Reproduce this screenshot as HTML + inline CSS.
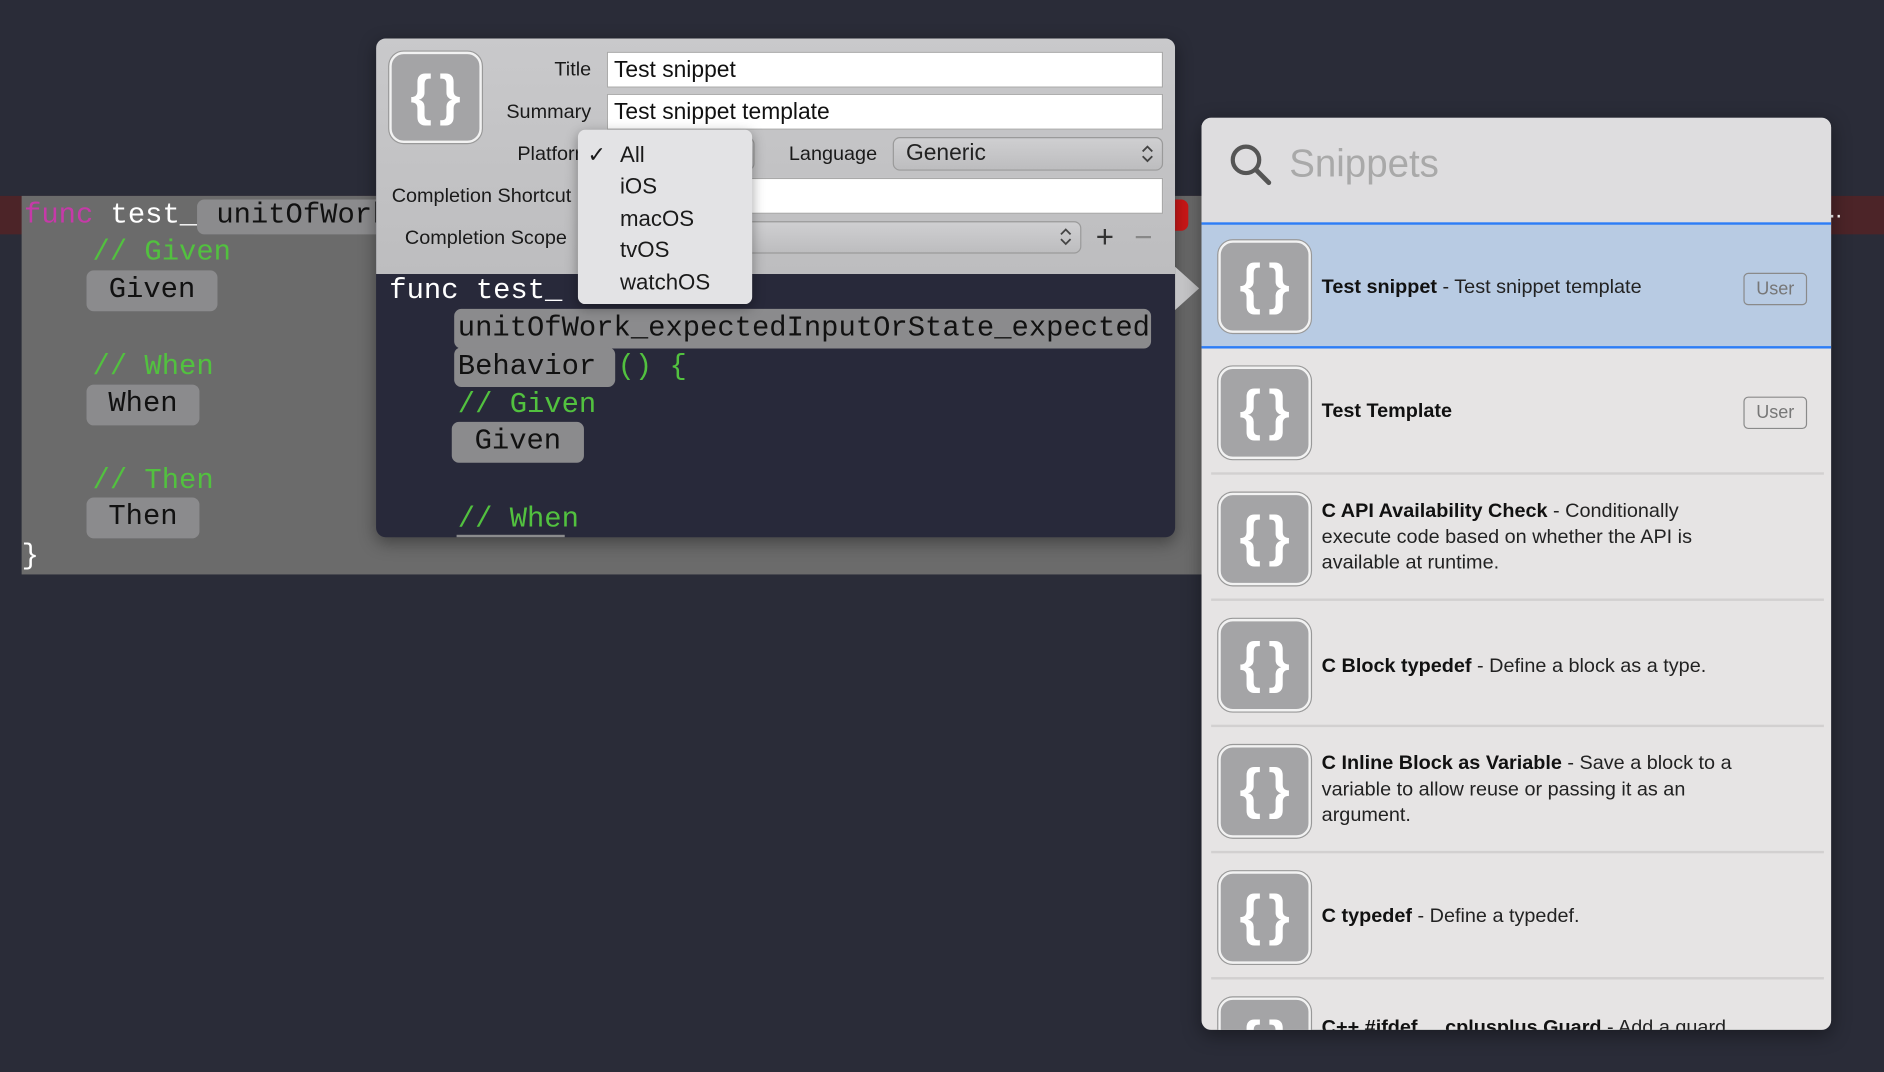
<!DOCTYPE html>
<html><head><meta charset="utf-8"><style>
html,body{margin:0;padding:0;width:1884px;height:1072px;overflow:hidden;background:#2a2c38}
#w{position:absolute;left:0;top:0;width:1568px;height:892px;transform:scale(1.20153,1.20179);transform-origin:0 0;font-family:"Liberation Sans",sans-serif}
.a{position:absolute}
.mono{font-family:"Liberation Mono","DejaVu Sans Mono",monospace;font-size:24px;line-height:32px;white-space:pre}
.ph{background:#8b8b8d;border-radius:6px;color:#111}
.g{color:#52c13f}
.lbl{position:absolute;font-size:16.5px;color:#1a1a1a;text-align:right}
.fld{position:absolute;background:#fff;border:1px solid #a9a9a9;font-size:19px;line-height:28px;padding-left:5px;box-sizing:border-box;color:#111}
.pop{position:absolute;border:1px solid #9a9a9a;border-radius:6px;background:linear-gradient(#cfcfd1,#bdbdbf);box-sizing:border-box;font-size:19px;line-height:26px;padding-left:10px;color:#222}
.icon{position:absolute;width:73px;height:73px;background:#a4a4a6;border:2px solid #f2f2f2;border-radius:12px;box-shadow:0 0 0 1px #999;color:#fff;font-size:46px;font-weight:bold;text-align:center;line-height:68px;font-family:"Liberation Sans",sans-serif;letter-spacing:6px;text-indent:6px}
.row{position:absolute;left:0;width:524px;height:105px}
.row .icon{left:14px;top:15px}
.row .t{position:absolute;left:100px;width:370px;font-size:16.5px;line-height:21.5px;color:#222}
.row b{font-weight:bold;color:#111}
.sep{position:absolute;left:8px;right:6px;bottom:0;height:2px;background:#d2d0d0}
.user{position:absolute;left:451px;width:51px;height:25px;border:1px solid #8a8a8a;border-radius:4px;font-size:15px;line-height:25px;text-align:center;color:#777}
</style></head><body><div id="w">
<div class="a" style="left:0;top:163px;width:1568px;height:32px;background:#4c2428"></div>
<div class="a" style="left:18px;top:163px;width:982px;height:315px;background:#6b6b6b"></div>
<div class="a mono" style="left:20px;top:164px;color:#fff"><span style="color:#c63aa8">func</span> test_<span class="ph" style="padding:0 12px 2px 16px">unitOfWork</span></div>
<div class="a mono g" style="left:77px;top:195px">// Given</div>
<div class="a ph mono" style="left:72px;top:225px;width:109px;height:34px;text-align:center;line-height:34px">Given</div>
<div class="a mono g" style="left:77px;top:290px">// When</div>
<div class="a ph mono" style="left:72px;top:320px;width:94px;height:34px;text-align:center;line-height:34px">When</div>
<div class="a mono g" style="left:77px;top:385px">// Then</div>
<div class="a ph mono" style="left:72px;top:414px;width:94px;height:34px;text-align:center;line-height:34px">Then</div>
<div class="a mono" style="left:18px;top:448px;color:#fff">}</div>
<div class="a" style="left:965px;top:166px;width:24px;height:26px;background:#d01818;border-radius:6px"></div>
<div class="a" style="left:1522px;top:164px;color:#fff;font-size:20px">..</div>

<div class="a" style="left:313px;top:32px;width:665px;height:415px;border-radius:8px;overflow:hidden;background:#28293a;box-shadow:0 4px 14px rgba(0,0,0,.4)">
 <div class="a" style="left:0;top:0;width:665px;height:196px;background:linear-gradient(#c9c9cb,#bdbdbf)"></div>
</div>
<div class="a" style="left:978px;top:222px;width:0;height:0;border-top:18px solid transparent;border-bottom:18px solid transparent;border-left:20px solid #c4c4c6"></div>
<div class="icon" style="left:324px;top:43px;width:73px;height:72px">{}</div>
<div class="lbl" style="left:400px;width:92px;top:49px">Title</div>
<div class="lbl" style="left:400px;width:92px;top:84px">Summary</div>
<div class="lbl" style="left:400px;width:92px;top:119px">Platform</div>
<div class="lbl" style="left:600px;width:130px;top:119px">Language</div>
<div class="lbl" style="left:326px;width:200px;top:154px;text-align:left">Completion Shortcut</div>
<div class="lbl" style="left:337px;width:200px;top:189px;text-align:left">Completion Scope</div>
<div class="fld" style="left:505px;top:43px;width:463px;height:30px;line-height:30px">Test snippet</div>
<div class="fld" style="left:505px;top:78px;width:463px;height:30px;line-height:30px">Test snippet template</div>
<div class="pop" style="left:560px;top:114px;width:68px;height:28px"></div>
<div class="pop" style="left:743px;top:114px;width:225px;height:28px">Generic<svg style="position:absolute;right:7px;top:5px" width="10" height="16" viewBox="0 0 10 16"><path d="M1 6 L5 2 L9 6 M1 10 L5 14 L9 10" fill="none" stroke="#444" stroke-width="1.5"/></svg></div>
<div class="fld" style="left:560px;top:148px;width:408px;height:30px"></div>
<div class="pop" style="left:560px;top:184px;width:340px;height:27px"><svg style="position:absolute;right:7px;top:4px" width="10" height="16" viewBox="0 0 10 16"><path d="M1 6 L5 2 L9 6 M1 10 L5 14 L9 10" fill="none" stroke="#444" stroke-width="1.5"/></svg></div>
<div class="a" style="left:912px;top:182px;font-size:26px;color:#333">+</div>
<div class="a" style="left:944px;top:182px;font-size:26px;color:#888">−</div>
<div class="a mono" style="left:324px;top:227px;color:#fff">func test_</div>
<div class="a ph mono" style="left:378px;top:257px;width:580px;height:33px;padding-left:3px;box-sizing:border-box;line-height:34px">unitOfWork_expectedInputOrState_expected</div>
<div class="a ph mono" style="left:378px;top:289px;width:134px;height:33px;padding-left:3px;box-sizing:border-box;line-height:34px">Behavior</div>
<div class="a mono g" style="left:514px;top:290px">() {</div>
<div class="a mono g" style="left:381px;top:322px">// Given</div>
<div class="a ph mono" style="left:376px;top:351px;width:110px;height:34px;text-align:center;line-height:34px">Given</div>
<div class="a mono g" style="left:381px;top:417px">// When</div>
<div class="a" style="left:380px;top:445px;width:90px;height:2px;background:#8b8b8d"></div>

<div class="a" style="left:481px;top:108px;width:145px;height:145px;background:#e3e3e5;border-radius:6px;box-shadow:0 3px 10px rgba(0,0,0,.35);font-size:18.5px;color:#1a1a1a">
 <div class="a" style="left:8px;top:10px">✓</div>
 <div class="a" style="left:35px;top:10px">All</div>
 <div class="a" style="left:35px;top:36px">iOS</div>
 <div class="a" style="left:35px;top:63px">macOS</div>
 <div class="a" style="left:35px;top:89px">tvOS</div>
 <div class="a" style="left:35px;top:116px">watchOS</div>
</div>

<div class="a" style="left:1000px;top:98px;width:524px;height:759px;background:#e6e4e4;border-radius:8px;overflow:hidden;box-shadow:0 4px 16px rgba(0,0,0,.4)">
 <div class="a" style="left:0;top:0;width:524px;height:87px;background:#dedddf"></div>
 <svg class="a" style="left:22px;top:20px" width="38" height="38" viewBox="0 0 38 38"><circle cx="15" cy="15" r="11" fill="none" stroke="#555" stroke-width="3.5"/><line x1="23" y1="23" x2="34" y2="34" stroke="#555" stroke-width="4" stroke-linecap="round"/></svg>
 <div class="a" style="left:73px;top:20px;font-size:32px;color:#a9a9a9">Snippets</div>
 <div class="row" style="top:87px;height:105px;background:#b8cbe3;border-top:2px solid #2d7df6;border-bottom:2px solid #2d7df6;box-sizing:border-box">
  <div class="icon" style="top:13px">{}</div>
  <div class="t" style="top:42px"><b>Test snippet</b> - Test snippet template</div>
  <div class="user" style="top:40px">User</div>
 </div>
 <div class="row" style="top:192px"><div class="icon">{}</div><div class="t" style="top:42px"><b>Test Template</b></div><div class="user" style="top:40px">User</div><div class="sep"></div></div>
 <div class="row" style="top:297px"><div class="icon">{}</div><div class="t" style="top:20px;width:350px"><b>C API Availability Check</b> - Conditionally execute code based on whether the API is available at runtime.</div><div class="sep"></div></div>
 <div class="row" style="top:402px"><div class="icon">{}</div><div class="t" style="top:44px"><b>C Block typedef</b> - Define a block as a type.</div><div class="sep"></div></div>
 <div class="row" style="top:507px"><div class="icon">{}</div><div class="t" style="top:20px;width:372px"><b>C Inline Block as Variable</b> - Save a block to a variable to allow reuse or passing it as an argument.</div><div class="sep"></div></div>
 <div class="row" style="top:612px"><div class="icon">{}</div><div class="t" style="top:42px"><b>C typedef</b> - Define a typedef.</div><div class="sep"></div></div>
 <div class="row" style="top:717px"><div class="icon">{}</div><div class="t" style="top:30px;width:420px"><b>C++ #ifdef __cplusplus Guard</b> - Add a guard</div></div>
</div>
</div></body></html>
